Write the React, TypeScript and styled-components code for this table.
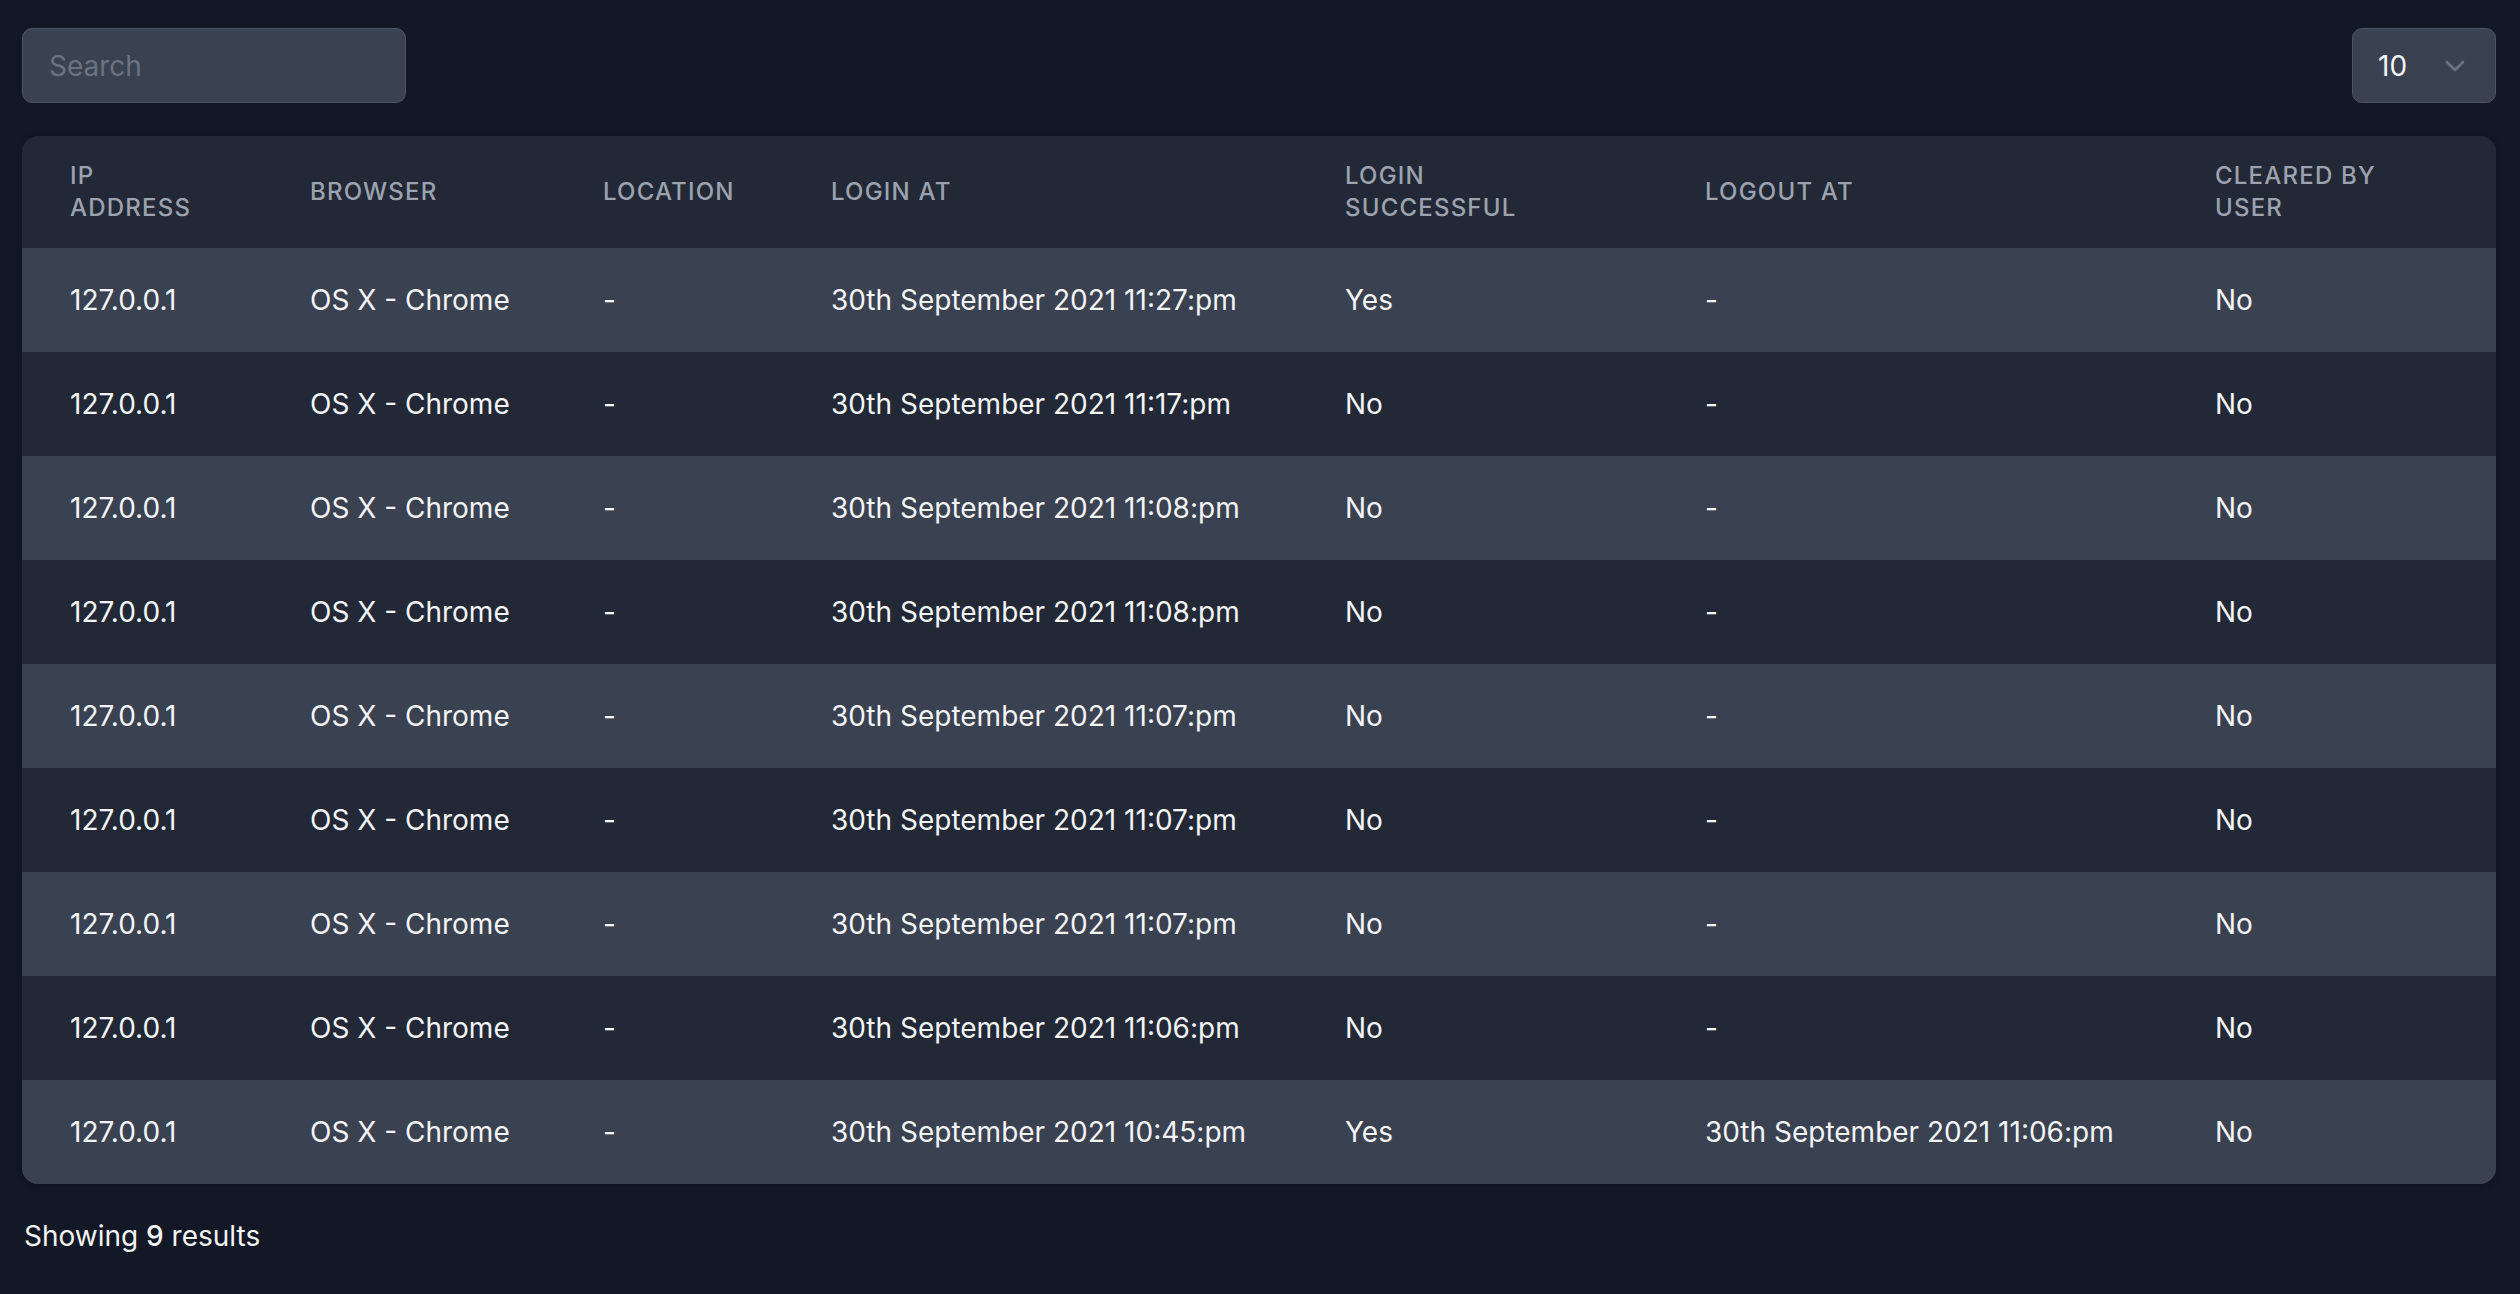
import React from "react";
import styled, { createGlobalStyle } from "styled-components";

const GlobalStyle = createGlobalStyle`
  html, body {
    margin: 0;
    padding: 0;
    background: #121826;
  }
  body {
    font-family: Inter, "Noto Sans", "Liberation Sans", sans-serif;
    color: #f3f4f6;
  }
  * { box-sizing: border-box; }
`;

const Page = styled.div`
  min-height: 100vh;
  padding: 28px 24px 0 22px;
  background: #121826;
`;

const Toolbar = styled.div`
  display: flex;
  align-items: center;
  justify-content: space-between;
`;

const SearchInput = styled.input`
  width: 384px;
  height: 75px;
  padding: 0 26px;
  border: 1px solid #4d5464;
  border-radius: 10px;
  background: #3a4151;
  color: #f3f4f6;
  font-family: Inter, "Noto Sans", sans-serif;
  font-size: 28px;
  outline: none;
  &::placeholder {
    color: #6b7280;
  }
`;

const SelectBox = styled.div`
  width: 144px;
  height: 75px;
  display: flex;
  align-items: center;
  justify-content: space-between;
  padding: 0 30px 0 25px;
  border: 1px solid #4d5464;
  border-radius: 10px;
  background: #3a4151;
  color: #f3f4f6;
  font-size: 28px;
`;

const Chevron = styled.svg`
  width: 20px;
  height: 12px;
  display: block;
`;

const TableCard = styled.div`
  margin-top: 33px;
  border-radius: 16px;
  overflow: hidden;
  background: #222835;
  box-shadow: 0 2px 6px rgba(0, 0, 0, 0.25);
`;

const Table = styled.table`
  width: 100%;
  border-collapse: collapse;
  table-layout: fixed;
`;

const HeadCell = styled.th`
  padding: 24px 48px;
  text-align: left;
  vertical-align: middle;
  font-size: 24px;
  line-height: 32px;
  font-weight: 500;
  letter-spacing: 0.05em;
  text-transform: uppercase;
  color: #9ca3af;
  background: #222835;
`;

const Row = styled.tr<{ $light: boolean }>`
  background: ${(p) => (p.$light ? "#3a4151" : "#222835")};
`;

const Cell = styled.td`
  padding: 32px 48px;
  font-size: 28px;
  line-height: 40px;
  font-weight: 400;
  color: #f3f4f6;
  white-space: nowrap;
`;

const Footer = styled.p`
  margin: 32px 0 0 2px;
  font-size: 28px;
  line-height: 40px;
  color: #f3f4f6;
`;

const Count = styled.span`
  font-weight: 500;
`;

const columns: { label: React.ReactNode; width: number }[] = [
  { label: <>IP<br />Address</>, width: 240 },
  { label: "Browser", width: 293 },
  { label: "Location", width: 228 },
  { label: "Login at", width: 514 },
  { label: <>Login<br />Successful</>, width: 360 },
  { label: "Logout at", width: 510 },
  { label: <>Cleared by<br />user</>, width: 329 },
];

type Entry = { login: string; ok: string; logout: string };

const rows: Entry[] = [
  { login: "30th September 2021 11:27:pm", ok: "Yes", logout: "-" },
  { login: "30th September 2021 11:17:pm", ok: "No", logout: "-" },
  { login: "30th September 2021 11:08:pm", ok: "No", logout: "-" },
  { login: "30th September 2021 11:08:pm", ok: "No", logout: "-" },
  { login: "30th September 2021 11:07:pm", ok: "No", logout: "-" },
  { login: "30th September 2021 11:07:pm", ok: "No", logout: "-" },
  { login: "30th September 2021 11:07:pm", ok: "No", logout: "-" },
  { login: "30th September 2021 11:06:pm", ok: "No", logout: "-" },
  {
    login: "30th September 2021 10:45:pm",
    ok: "Yes",
    logout: "30th September 2021 11:06:pm",
  },
];

export default function App() {
  return (
    <>
      <GlobalStyle />
      <Page>
        <Toolbar>
          <SearchInput placeholder="Search" />
          <SelectBox>
            <span>10</span>
            <Chevron viewBox="0 0 20 12" fill="none">
              <path
                d="M2 2l8 8 8-8"
                stroke="#6b7280"
                strokeWidth="2.6"
                strokeLinecap="round"
                strokeLinejoin="round"
              />
            </Chevron>
          </SelectBox>
        </Toolbar>
        <TableCard>
          <Table>
            <colgroup>
              {columns.map((c, i) => (
                <col key={i} style={{ width: c.width }} />
              ))}
            </colgroup>
            <thead>
              <tr>
                {columns.map((c, i) => (
                  <HeadCell key={i}>{c.label}</HeadCell>
                ))}
              </tr>
            </thead>
            <tbody>
              {rows.map((r, i) => (
                <Row key={i} $light={i % 2 === 0}>
                  <Cell>127.0.0.1</Cell>
                  <Cell>OS X - Chrome</Cell>
                  <Cell>-</Cell>
                  <Cell>{r.login}</Cell>
                  <Cell>{r.ok}</Cell>
                  <Cell>{r.logout}</Cell>
                  <Cell>No</Cell>
                </Row>
              ))}
            </tbody>
          </Table>
        </TableCard>
        <Footer>
          Showing <Count>9</Count> results
        </Footer>
      </Page>
    </>
  );
}
